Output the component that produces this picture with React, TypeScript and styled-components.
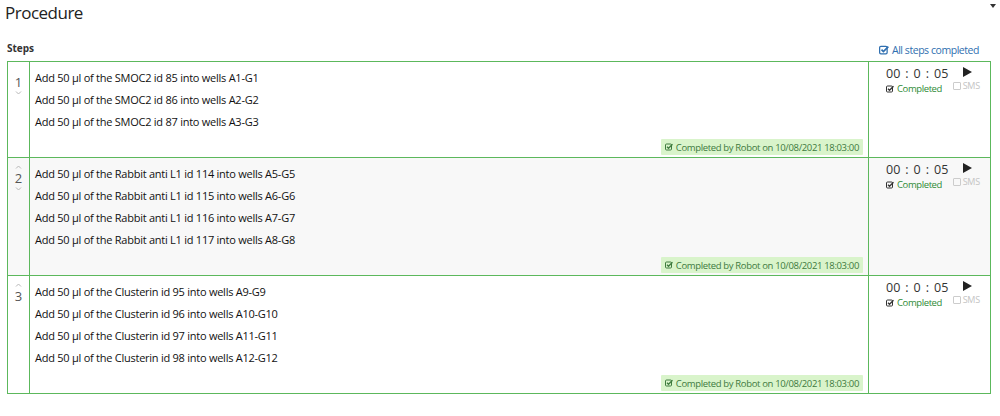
import React from "react";
import styled, { createGlobalStyle } from "styled-components";

const GlobalStyle = createGlobalStyle`
  html, body {
    margin: 0;
    padding: 0;
    background: #fff;
  }
  body {
    font-family: "Open Sans", "Noto Sans", sans-serif;
    color: #222;
  }
`;

const green = "#5cb85c";

interface Step {
  lines: string[];
  by: string;
}

const steps: Step[] = [
  {
    lines: [
      "Add 50 µl of the SMOC2 id 85 into wells A1-G1",
      "Add 50 µl of the SMOC2 id 86 into wells A2-G2",
      "Add 50 µl of the SMOC2 id 87 into wells A3-G3",
    ],
    by: "Completed by Robot on 10/08/2021 18:03:00",
  },
  {
    lines: [
      "Add 50 µl of the Rabbit anti L1 id 114 into wells A5-G5",
      "Add 50 µl of the Rabbit anti L1 id 115 into wells A6-G6",
      "Add 50 µl of the Rabbit anti L1 id 116 into wells A7-G7",
      "Add 50 µl of the Rabbit anti L1 id 117 into wells A8-G8",
    ],
    by: "Completed by Robot on 10/08/2021 18:03:00",
  },
  {
    lines: [
      "Add 50 µl of the Clusterin id 95 into wells A9-G9",
      "Add 50 µl of the Clusterin id 96 into wells A10-G10",
      "Add 50 µl of the Clusterin id 97 into wells A11-G11",
      "Add 50 µl of the Clusterin id 98 into wells A12-G12",
    ],
    by: "Completed by Robot on 10/08/2021 18:03:00",
  },
];

const Page = styled.div`
  padding: 0 4px 0 5px;
`;

const Header = styled.div`
  display: flex;
  justify-content: space-between;
  align-items: flex-start;
  height: 38px;
`;

const Title = styled.h2`
  margin: 0;
  font-size: 17px;
  font-weight: 400;
  letter-spacing: -0.5px;
  line-height: 25px;
  color: #222;
`;

const Caret = styled.span`
  margin-top: 4px;
  width: 0;
  height: 0;
  border-left: 3px solid transparent;
  border-right: 3px solid transparent;
  border-top: 4px solid #333;
`;

const StepsBar = styled.div`
  display: flex;
  justify-content: space-between;
  align-items: flex-end;
  padding: 0 17px 0 2px;
  height: 17px;
  margin-bottom: 6px;
`;

const StepsLabel = styled.span`
  font-size: 10px;
  font-weight: 700;
  color: #333;
  line-height: 14px;
`;

const AllDone = styled.a`
  display: flex;
  align-items: center;
  gap: 3px;
  font-size: 10.5px;
  letter-spacing: -0.45px;
  color: #2f6fb0;
  text-decoration: none;
  line-height: 14px;
  margin-bottom: -2px;
`;

const Table = styled.div`
  margin: 0 5px 0 2px;
  border: 1px solid ${green};
  border-bottom: none;
`;

const Row = styled.div<{ $striped: boolean }>`
  display: grid;
  grid-template-columns: 22px 1fr 121px;
  border-bottom: 1px solid ${green};
  background: ${(p) => (p.$striped ? "#f8f8f8" : "#fff")};
`;

const NumCell = styled.div`
  display: flex;
  flex-direction: column;
  align-items: center;
  padding-top: 5px;
  border-right: 1px solid ${green};
  color: #555;
`;

const Chevron = styled.svg<{ $hidden?: boolean }>`
  visibility: ${(p) => (p.$hidden ? "hidden" : "visible")};
  display: block;
`;

const Num = styled.span`
  font-size: 13px;
  line-height: 14px;
`;

const Body = styled.div`
  display: flex;
  flex-direction: column;
  padding: 5px 5px 2px 5px;
  border-right: 1px solid ${green};
`;

const Line = styled.div`
  font-size: 11px;
  letter-spacing: -0.25px;
  line-height: 22px;
  color: #111;
`;

const Badge = styled.span`
  align-self: flex-end;
  margin-top: 6px;
  display: inline-flex;
  align-items: center;
  gap: 3px;
  height: 16px;
  padding: 0 4px;
  background: #d9f4cb;
  color: #3e7a3e;
  font-size: 9.5px;
  letter-spacing: -0.35px;
  border-radius: 1px;
`;

const Side = styled.div`
  padding: 1px 10px 0 17px;
`;

const TimerRow = styled.div`
  display: flex;
  justify-content: space-between;
  align-items: flex-start;
`;

const Timer = styled.span`
  display: flex;
  gap: 5px;
  font-size: 12.5px;
  color: #333;
  line-height: 18px;
  margin-top: 2px;
`;

const Play = styled.svg`
  margin-right: 8px;
  margin-top: 4px;
`;

const StatusRow = styled.div`
  display: flex;
  justify-content: space-between;
  align-items: flex-start;
  margin-top: -1px;
`;

const Done = styled.span`
  display: inline-flex;
  align-items: center;
  gap: 3px;
  font-size: 9.5px;
  letter-spacing: -0.4px;
  color: #2e8b36;
  line-height: 14px;
`;

const Sms = styled.span`
  display: inline-flex;
  align-items: center;
  gap: 2px;
  font-size: 9px;
  letter-spacing: -0.2px;
  color: #c4c4c4;
  line-height: 10px;
  margin-top: -1px;
`;

const SmsBox = styled.span`
  width: 6px;
  height: 6px;
  border: 1px solid #ccc;
  border-radius: 1px;
`;

const CheckSquare: React.FC<{ color: string; size?: number }> = ({ color, size = 9 }) => (
  <svg width={size} height={size} viewBox="0 0 16 16">
    <rect x="1" y="2" width="12" height="12" rx="2" fill="none" stroke={color} strokeWidth="2" />
    <path d="M4 7.5 L7 10.5 L15 2.5" fill="none" stroke={color} strokeWidth="2.6" />
  </svg>
);

const ChevronIcon: React.FC<{ up?: boolean; hidden?: boolean }> = ({ up, hidden }) => (
  <Chevron $hidden={hidden} width="7" height="8" viewBox="0 0 7 8">
    <path
      d={up ? "M1 5.5 L3.5 3 L6 5.5" : "M1 2.5 L3.5 5 L6 2.5"}
      fill="none"
      stroke="#b8b8b8"
      strokeWidth="1"
    />
  </Chevron>
);

export default function App() {
  return (
    <Page>
      <GlobalStyle />
      <Header>
        <Title>Procedure</Title>
        <Caret />
      </Header>
      <StepsBar>
        <StepsLabel>Steps</StepsLabel>
        <AllDone href="#">
          <CheckSquare color="#2f6fb0" size={10} />
          All steps completed
        </AllDone>
      </StepsBar>
      <Table>
        {steps.map((step, i) => (
          <Row key={i} $striped={i === 1}>
            <NumCell>
              <ChevronIcon up hidden={i === 0} />
              <Num>{i + 1}</Num>
              <ChevronIcon hidden={i === steps.length - 1} />
            </NumCell>
            <Body>
              {step.lines.map((l) => (
                <Line key={l}>{l}</Line>
              ))}
              <Badge>
                <CheckSquare color="#3e7a3e" size={8} />
                {step.by}
              </Badge>
            </Body>
            <Side>
              <TimerRow>
                <Timer>
                  <span>00</span>
                  <span>:</span>
                  <span>0</span>
                  <span>:</span>
                  <span>05</span>
                </Timer>
                <Play width="9" height="10" viewBox="0 0 9 10">
                  <path d="M0 0 L9 5 L0 10 Z" fill="#222" />
                </Play>
              </TimerRow>
              <StatusRow>
                <Done>
                  <CheckSquare color="#333" size={8} />
                  Completed
                </Done>
                <Sms>
                  <SmsBox />
                  SMS
                </Sms>
              </StatusRow>
            </Side>
          </Row>
        ))}
      </Table>
    </Page>
  );
}
